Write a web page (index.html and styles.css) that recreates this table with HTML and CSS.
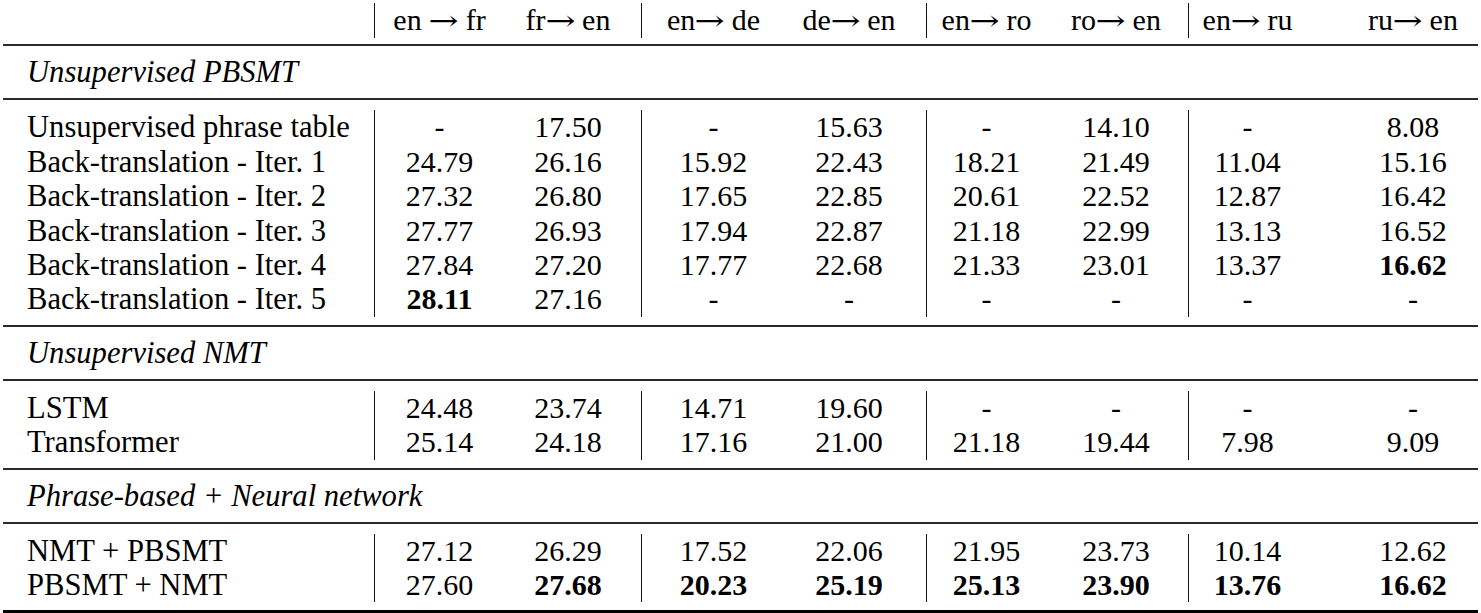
FILE: index.html
```html
<!DOCTYPE html>
<html>
<head>
<meta charset="utf-8">
<link rel="stylesheet" href="styles.css">
</head>
<body>
<div class="table">
  <div class="row head">
    <div class="cell label"></div>
    <div class="cell bar">en <span class="arr">→</span> fr</div>
    <div class="cell">fr<span class="arr">→</span> en</div>
    <div class="cell bar">en<span class="arr">→</span> de</div>
    <div class="cell">de<span class="arr">→</span> en</div>
    <div class="cell bar">en<span class="arr">→</span> ro</div>
    <div class="cell">ro<span class="arr">→</span> en</div>
    <div class="cell bar">en<span class="arr">→</span> ru</div>
    <div class="cell">ru<span class="arr">→</span> en</div>
  </div>
  <div class="rule"></div>
  <div class="section">Unsupervised PBSMT</div>
  <div class="rule"></div>
  <div class="block">
    <div class="row">
      <div class="cell label">Unsupervised phrase table</div>
      <div class="cell bar">-</div><div class="cell">17.50</div>
      <div class="cell bar">-</div><div class="cell">15.63</div>
      <div class="cell bar">-</div><div class="cell">14.10</div>
      <div class="cell bar">-</div><div class="cell">8.08</div>
    </div>
    <div class="row">
      <div class="cell label">Back-translation - Iter. 1</div>
      <div class="cell bar">24.79</div><div class="cell">26.16</div>
      <div class="cell bar">15.92</div><div class="cell">22.43</div>
      <div class="cell bar">18.21</div><div class="cell">21.49</div>
      <div class="cell bar">11.04</div><div class="cell">15.16</div>
    </div>
    <div class="row">
      <div class="cell label">Back-translation - Iter. 2</div>
      <div class="cell bar">27.32</div><div class="cell">26.80</div>
      <div class="cell bar">17.65</div><div class="cell">22.85</div>
      <div class="cell bar">20.61</div><div class="cell">22.52</div>
      <div class="cell bar">12.87</div><div class="cell">16.42</div>
    </div>
    <div class="row">
      <div class="cell label">Back-translation - Iter. 3</div>
      <div class="cell bar">27.77</div><div class="cell">26.93</div>
      <div class="cell bar">17.94</div><div class="cell">22.87</div>
      <div class="cell bar">21.18</div><div class="cell">22.99</div>
      <div class="cell bar">13.13</div><div class="cell">16.52</div>
    </div>
    <div class="row">
      <div class="cell label">Back-translation - Iter. 4</div>
      <div class="cell bar">27.84</div><div class="cell">27.20</div>
      <div class="cell bar">17.77</div><div class="cell">22.68</div>
      <div class="cell bar">21.33</div><div class="cell">23.01</div>
      <div class="cell bar">13.37</div><div class="cell best">16.62</div>
    </div>
    <div class="row">
      <div class="cell label">Back-translation - Iter. 5</div>
      <div class="cell bar best">28.11</div><div class="cell">27.16</div>
      <div class="cell bar">-</div><div class="cell">-</div>
      <div class="cell bar">-</div><div class="cell">-</div>
      <div class="cell bar">-</div><div class="cell">-</div>
    </div>
  </div>
  <div class="rule"></div>
  <div class="section">Unsupervised NMT</div>
  <div class="rule"></div>
  <div class="block">
    <div class="row">
      <div class="cell label">LSTM</div>
      <div class="cell bar">24.48</div><div class="cell">23.74</div>
      <div class="cell bar">14.71</div><div class="cell">19.60</div>
      <div class="cell bar">-</div><div class="cell">-</div>
      <div class="cell bar">-</div><div class="cell">-</div>
    </div>
    <div class="row">
      <div class="cell label">Transformer</div>
      <div class="cell bar">25.14</div><div class="cell">24.18</div>
      <div class="cell bar">17.16</div><div class="cell">21.00</div>
      <div class="cell bar">21.18</div><div class="cell">19.44</div>
      <div class="cell bar">7.98</div><div class="cell">9.09</div>
    </div>
  </div>
  <div class="rule"></div>
  <div class="section">Phrase-based + Neural network</div>
  <div class="rule"></div>
  <div class="block">
    <div class="row">
      <div class="cell label">NMT + PBSMT</div>
      <div class="cell bar">27.12</div><div class="cell">26.29</div>
      <div class="cell bar">17.52</div><div class="cell">22.06</div>
      <div class="cell bar">21.95</div><div class="cell">23.73</div>
      <div class="cell bar">10.14</div><div class="cell">12.62</div>
    </div>
    <div class="row">
      <div class="cell label">PBSMT + NMT</div>
      <div class="cell bar">27.60</div><div class="cell best">27.68</div>
      <div class="cell bar best">20.23</div><div class="cell best">25.19</div>
      <div class="cell bar best">25.13</div><div class="cell best">23.90</div>
      <div class="cell bar best">13.76</div><div class="cell best">16.62</div>
    </div>
  </div>
  <div class="rule thick"></div>
</div>
</body>
</html>
```

FILE: styles.css
```css
html, body {
  margin: 0;
  padding: 0;
  background: #ffffff;
}

body {
  font-family: "Liberation Serif", Tinos, serif;
  font-size: 30px;
  color: #000000;
}

.table {
  width: 1475px;
  margin: 3px 0 0 3px;
  display: flex;
  flex-direction: column;
}

.row {
  display: grid;
  grid-template-columns: 371px 130px 137px 140px 145px 125px 137px 142px 148px;
  height: 34.4px;
  line-height: 34.4px;
}

.row.head {
  margin-bottom: 7px;
}

.cell {
  text-align: center;
  white-space: nowrap;
}

/* fine centring of each language column */
.row > .cell:nth-child(3) { padding-right: 9px; }
.row > .cell:nth-child(4) { padding-left: 4px; }
.row > .cell:nth-child(5) { padding-right: 9px; }
.row > .cell:nth-child(6) { padding-right: 5px; }
.row > .cell:nth-child(7) { padding-right: 7px; }
.row > .cell:nth-child(8) { padding-right: 24px; }
.row > .cell:nth-child(9) { padding-left: 18px; }

.cell.label {
  text-align: left;
  padding-left: 24px;
  font-size: 30.6px;
}

.cell.bar {
  border-left: 1px solid #111111;
}

.best {
  font-weight: bold;
}

.arr {
  display: inline-block;
  width: 1.05em;
  text-align: center;
  font-family: "DejaVu Serif", serif;
  font-size: 0.92em;
  transform: scaleX(1.3);
}

.rule {
  height: 2px;
  background: #2a2a2a;
}

.rule.thick {
  height: 4px;
  background: #000000;
}

.section {
  height: 52px;
  line-height: 52px;
  padding-left: 24px;
  font-size: 30.6px;
  font-style: italic;
}

.block {
  padding: 10px 0 8px 0;
}
```
